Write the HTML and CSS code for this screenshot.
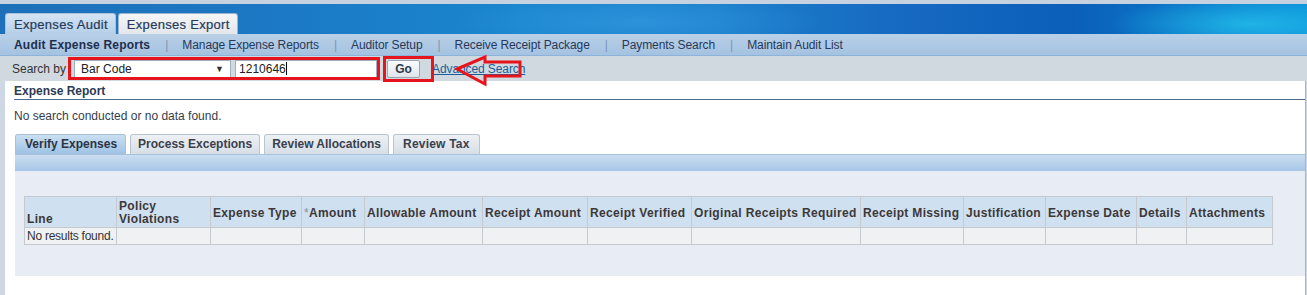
FILE: index.html
```html
<!DOCTYPE html>
<html>
<head>
<meta charset="utf-8">
<link rel="stylesheet" href="styles.css">
</head>
<body>
<div class="top-strip"></div>
<div class="banner">
  <div class="app-tab active">Expenses Audit</div>
  <div class="app-tab">Expenses Export</div>
</div>
<div class="nav">
  <span class="nav-item current">Audit Expense Reports</span><span class="sep">|</span>
  <span class="nav-item">Manage Expense Reports</span><span class="sep">|</span>
  <span class="nav-item">Auditor Setup</span><span class="sep">|</span>
  <span class="nav-item">Receive Receipt Package</span><span class="sep">|</span>
  <span class="nav-item">Payments Search</span><span class="sep">|</span>
  <span class="nav-item">Maintain Audit List</span>
</div>
<div class="search">
  <span class="search-label">Search by</span>
  <div class="select"><span>Bar Code</span><span class="caret">▼</span></div>
  <div class="input"><span>1210646</span><span class="cursor"></span></div>
  <button class="go">Go</button>
  <a class="adv">Advanced Search</a>
  <div class="mark mark-fields"></div>
  <div class="mark mark-go"></div>
  <svg class="arrow" width="80" height="34" viewBox="0 0 80 34">
    <polygon points="3,15 31,3 31,8 66,8 66,22 31,22 31,30" fill="none" stroke="#e5141d" stroke-width="3" stroke-linejoin="miter"/>
  </svg>
</div>
<div class="main">
  <div class="section-title">Expense Report</div>
  <div class="message">No search conducted or no data found.</div>
  <div class="subtabs">
    <div class="subtab active">Verify Expenses</div>
    <div class="subtab">Process Exceptions</div>
    <div class="subtab">Review Allocations</div>
    <div class="subtab">Review Tax</div>
  </div>
  <div class="subbar"></div>
  <div class="panel">
    <table class="grid">
      <thead>
        <tr>
          <th class="c-line">Line</th>
          <th class="c-pol">Policy<br>Violations</th>
          <th class="c-type">Expense Type</th>
          <th class="c-amt"><span class="req">*</span>Amount</th>
          <th class="c-allow">Allowable Amount</th>
          <th class="c-ramt">Receipt Amount</th>
          <th class="c-rver">Receipt Verified</th>
          <th class="c-orig">Original Receipts Required</th>
          <th class="c-miss">Receipt Missing</th>
          <th class="c-just">Justification</th>
          <th class="c-date">Expense Date</th>
          <th class="c-det">Details</th>
          <th class="c-att">Attachments</th>
        </tr>
      </thead>
      <tbody>
        <tr>
          <td>No results found.</td><td></td><td></td><td></td><td></td><td></td><td></td><td></td><td></td><td></td><td></td><td></td><td></td>
        </tr>
      </tbody>
    </table>
  </div>
</div>
</body>
</html>
```

FILE: styles.css
```css
* { box-sizing: border-box; }
html, body { margin: 0; padding: 0; }
body {
  background: #cdd8e4;
  font-family: "Liberation Sans", Arial, sans-serif;
  font-size: 12px;
  color: #333;
  width: 1307px;
  height: 295px;
  overflow: hidden;
}
.top-strip { height: 4px; background: #c7d2e1; }
.banner {
  height: 30px;
  display: flex;
  align-items: flex-end;
  gap: 2px;
  padding-left: 5px;
  background:
    radial-gradient(ellipse 260px 40px at 640px 18px, rgba(60,160,230,0.55), rgba(60,160,230,0) 70%),
    radial-gradient(ellipse 200px 40px at 1250px 20px, rgba(40,200,240,0.7), rgba(40,200,240,0) 70%),
    linear-gradient(90deg, #1d70b9 0%, #1c78c4 20%, #1986ce 40%, #1b7fcb 55%, #1668c0 70%, #0b5fb8 82%, #0a8fd8 100%);
}
.app-tab {
  height: 21px;
  padding: 0 7px 0 8px;
  font-size: 13px;
  letter-spacing: 0.3px;
  line-height: 21px;
  color: #253a5a;
  border: 1px solid #9eb4cc;
  border-bottom: none;
  border-radius: 3px 3px 0 0;
  background: linear-gradient(#f4f5f6, #e3e7eb);
  -webkit-text-stroke: 0.2px #253a5a;
}
.app-tab.active {
  background: linear-gradient(#d5e4f3, #b5cfe8);
  border-color: #a9c2dc;
}
.nav {
  height: 22px;
  display: flex;
  align-items: center;
  padding-left: 14px;
  background: linear-gradient(#b9d0e7, #a4c2e1);
  border-bottom: 1px solid #8fb2d9;
  color: #27395a;
  padding-top: 1px;
}
.nav-item { letter-spacing: -0.1px; }
.nav-item.current { font-weight: bold; color: #1e2f4d; letter-spacing: 0.2px; }
.sep { color: #7d95b4; padding: 0 14px 0 15px; }
.search {
  position: relative;
  height: 25px;
  display: flex;
  align-items: center;
  padding-left: 12px;
  background: #d0d9df;
  color: #333;
}
.search-label { margin-right: 8px; }
.select {
  width: 157px;
  height: 18px;
  background: #fff;
  border: 1px solid #9fb0c0;
  display: flex;
  align-items: center;
  justify-content: space-between;
  padding: 0 6px 0 6px;
  color: #222;
}
.caret { font-size: 9px; color: #333; }
.input {
  margin-left: 4px;
  width: 142px;
  height: 18px;
  background: #fff;
  border: 1px solid #9fb0c0;
  display: flex;
  align-items: center;
  padding-left: 3px;
  color: #222;
}
.cursor { width: 1px; height: 13px; background: #000; }
.go {
  margin-left: 10px;
  width: 33px;
  height: 18px;
  padding: 0;
  font-family: "Liberation Sans", Arial, sans-serif;
  font-size: 12px;
  font-weight: bold;
  color: #2d3a4a;
  background: linear-gradient(#fbfcfd, #dfe5ea);
  border: 1px solid #9aa6b2;
  border-radius: 2px;
}
.adv {
  margin-left: 12px;
  color: #1a5e99;
  text-decoration: underline;
  letter-spacing: -0.1px;
}
.mark {
  position: absolute;
  border: 3px solid #e5141d;
}
.mark-fields { left: 68px; top: 1px; width: 312px; height: 23px; }
.mark-go { left: 383px; top: 0; width: 51px; height: 26px; }
.arrow { position: absolute; left: 454px; top: -2px; }
.main {
  margin-left: 5px;
  width: 1301px;
  height: 214px;
  background: #fff;
  border-right: 1px solid #a9b4c0;
  padding-left: 9px;
}
.section-title {
  padding-top: 3px;
  height: 19px;
  line-height: 14px;
  font-weight: bold;
  color: #2c3a52;
  border-bottom: 1px solid #4d6a90;
}
.message {
  padding-top: 9px;
  height: 34px;
  color: #333d4d;
  line-height: 14px;
}
.subtabs {
  display: flex;
  gap: 4px;
  padding-left: 1px;
}
.subtab {
  height: 20px;
  padding: 0 7px;
  line-height: 19px;
  font-weight: bold;
  color: #3a3f4d;
  border: 1px solid #b9c4cf;
  border-bottom: none;
  border-radius: 3px 3px 0 0;
  background: linear-gradient(#eef1f4, #d6dee6);
}
.subtab.active {
  padding: 0 8px 0 9px;
  background: linear-gradient(#cadff1, #9ec2e4);
  border-color: #a8c0d8;
  color: #2c3342;
}
.subtab:last-child { padding: 0 9px 0 9px; letter-spacing: 0.2px; }
.subbar {
  margin-left: 1px;
  height: 17px;
  background: linear-gradient(#cbdef0, #a6c6e6);
  border-top: 1px solid #a8c2dc;
}
.panel {
  margin-left: 1px;
  height: 105px;
  background: #e8edf5;
  padding: 25px 0 0 9px;
}
.grid {
  border-collapse: collapse;
  table-layout: fixed;
  width: 1248px;
}
.grid th, .grid td {
  border: 1px solid #c6cace;
  padding: 0 2px;
  text-align: left;
  white-space: nowrap;
}
.grid th {
  height: 31px;
  background: #cfe0f0;
  color: #3d3838;
  font-weight: bold;
  letter-spacing: 0.33px;
  vertical-align: middle;
  line-height: 13px;
  padding-top: 2px;
}
.grid th.c-line, .grid th.c-pol {
  vertical-align: bottom;
  padding-top: 0;
  padding-bottom: 1px;
}
.grid td {
  height: 17px;
  background: #f0f1f3;
  color: #333;
  padding-left: 2px;
  letter-spacing: -0.25px;
}
.req { color: #8a8f96; font-weight: normal; }
.c-line { width: 92px; }
.c-pol { width: 94px; }
.c-type { width: 91px; }
.c-amt { width: 63px; }
.c-allow { width: 118px; }
.c-ramt { width: 105px; }
.c-rver { width: 104px; }
.c-orig { width: 169px; }
.c-miss { width: 103px; }
.c-just { width: 82px; }
.c-date { width: 91px; }
.c-det { width: 50px; }
.c-att { width: 86px; }
```
